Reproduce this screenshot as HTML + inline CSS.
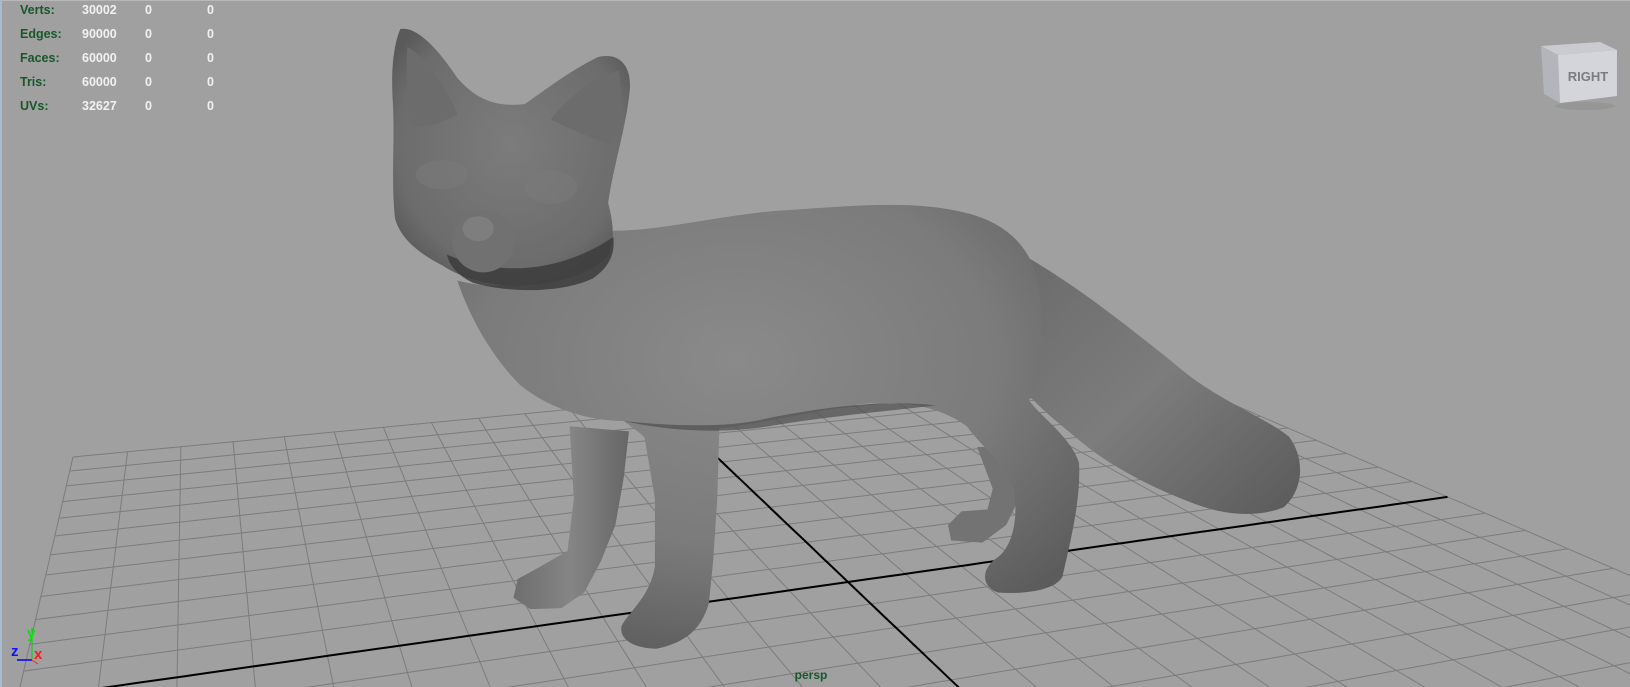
<!DOCTYPE html>
<html><head><meta charset="utf-8"><style>
html,body{margin:0;padding:0;width:1630px;height:687px;overflow:hidden;background:#a0a0a0}
#v{position:absolute;left:0;top:0}
.st{position:absolute;font:bold 12.5px "Liberation Sans",sans-serif;}
.l{color:#17572a;left:20px}
.n{color:#f2f2f2}
</style></head><body>
<svg id="v" width="1630" height="687" viewBox="0 0 1630 687">
<defs>
<radialGradient id="bd" cx="0.45" cy="0.35" r="0.7">
<stop offset="0" stop-color="#8a8a8a"/><stop offset="0.6" stop-color="#7b7b7b"/><stop offset="1" stop-color="#5c5c5c"/>
</radialGradient>
<linearGradient id="tl" x1="0" y1="0" x2="1" y2="1">
<stop offset="0" stop-color="#6a6a6a"/><stop offset="0.5" stop-color="#7c7c7c"/><stop offset="1" stop-color="#5a5a5a"/>
</linearGradient>
<linearGradient id="lg" x1="0" y1="0" x2="1" y2="0">
<stop offset="0" stop-color="#6e6e6e"/><stop offset="0.5" stop-color="#858585"/><stop offset="1" stop-color="#666"/>
</linearGradient>
<radialGradient id="hd" cx="0.5" cy="0.45" r="0.6">
<stop offset="0" stop-color="#7c7c7c"/><stop offset="0.8" stop-color="#6c6c6c"/><stop offset="1" stop-color="#5a5a5a"/>
</radialGradient>
</defs>
<rect x="0" y="0" width="1630" height="687" fill="#a0a0a0"/>
<g id="grid"></g>
<g transform="scale(1.0395)">
<path d="M548,410 L552,480 L546,530 L520,545 L498,557 L494,575 L510,586 L540,585 L562,570 L578,540 L592,505 L600,460 L605,415 Z" fill="url(#lg)"/>
<path d="M940,430 L955,470 L950,490 L925,492 L912,505 L915,520 L945,522 L968,505 L985,470 L975,430 Z" fill="#737373"/>
<path d="M975,240 C1030,270 1080,310 1130,350 C1170,385 1215,400 1240,420 C1255,440 1255,470 1235,488 C1210,498 1180,496 1150,485 C1110,470 1070,450 1040,425 C1010,400 990,385 975,360 Z" fill="url(#tl)"/>
<path d="M590,222 C640,222 700,205 760,202 C820,198 880,192 930,205 C970,215 995,240 1000,280 C1005,330 1000,370 990,385 C1000,400 1030,420 1038,445 C1040,480 1030,520 1022,555 C1015,568 985,572 960,570 C945,565 942,548 960,536 C975,525 980,495 975,470 C965,445 945,430 930,410 C900,388 860,384 820,390 C770,398 730,408 692,412 L690,480 L686,540 L682,580 C675,605 660,618 632,624 C610,624 595,615 598,602 C605,588 625,575 630,545 L630,480 L620,420 L600,405 C570,405 530,395 500,370 C470,340 450,300 440,270 C480,280 540,280 590,222 Z" fill="url(#bd)"/>
<path d="M600,405 C650,410 700,412 740,402 C790,392 850,384 900,390 C860,395 800,400 740,410 C690,418 640,414 600,405 Z" fill="#4e4e4e" opacity="0.7"/>
<path d="M385,28 C400,25 420,45 440,75 C460,98 480,103 505,100 C520,90 545,70 575,55 C595,50 607,62 606,85 C603,120 590,160 585,195 C590,215 592,230 585,245 C570,265 530,275 490,275 C460,272 440,265 425,255 C405,245 385,230 380,210 C376,170 380,140 378,100 C376,70 378,45 385,28 Z" fill="url(#hd)"/>
<path d="M392,45 C410,55 430,85 440,110 C420,120 405,125 395,120 C392,95 390,65 392,45 Z" fill="#6c6c6c"/>
<path d="M595,68 C570,75 545,95 530,115 C550,125 575,135 590,140 C597,115 600,90 595,68 Z" fill="#6c6c6c"/>
<path d="M430,245 C470,262 530,268 590,228 C592,245 585,258 570,268 C540,282 490,282 455,272 C440,265 432,255 430,245 Z" fill="#3c3c3c" opacity="0.85"/>
<ellipse cx="465" cy="232" rx="30" ry="30" fill="#717171"/>
<ellipse cx="460" cy="220" rx="15" ry="12" fill="#7e7e7e"/>
<ellipse cx="425" cy="168" rx="25" ry="14" fill="#7a7a7a" opacity="0.6"/>
<ellipse cx="530" cy="180" rx="25" ry="16" fill="#7a7a7a" opacity="0.6"/>
</g>
<g>
<polygon points="1541,46 1600,42 1617,50 1558,55" fill="#c9cbd0"/>
<polygon points="1541,46 1558,55 1560,103 1544,94" fill="#b3b5ba"/>
<polygon points="1558,55 1617,50 1617,96 1560,103" fill="#d3d5da"/>
<ellipse cx="1585" cy="106" rx="30" ry="4" fill="#888" opacity="0.4"/>
<text x="1588" y="81" font-family="Liberation Sans" font-weight="bold" font-size="13" fill="#7a7c80" text-anchor="middle">RIGHT</text>
</g>
<line x1="32" y1="659" x2="32" y2="628" stroke="#00d000" stroke-width="1"/>
<line x1="17" y1="660" x2="32" y2="660" stroke="#0000ff" stroke-width="1.5"/>
<line x1="32" y1="660" x2="38" y2="664" stroke="#ff2020" stroke-width="1"/>
<text x="27" y="638" font-family="Liberation Sans" font-weight="bold" font-size="15" fill="#10e010">y</text>
<text x="11" y="656" font-family="Liberation Sans" font-weight="bold" font-size="15" fill="#1010ff">z</text>
<text x="34" y="659" font-family="Liberation Sans" font-weight="bold" font-size="15" fill="#ff1818">x</text>
<text x="811" y="679" font-family="Liberation Sans" font-weight="bold" font-size="12" fill="#17572a" text-anchor="middle">persp</text>
<rect x="0" y="0" width="2" height="687" fill="#a8bcd0"/>
<rect x="0" y="0" width="1630" height="1" fill="#b8b8b8"/>
</svg>
<div class="st l" style="top:3px">Verts:</div><div class="st n" style="top:3px;left:82px">30002</div><div class="st n" style="top:3px;left:145px">0</div><div class="st n" style="top:3px;left:207px">0</div>
<div class="st l" style="top:27px">Edges:</div><div class="st n" style="top:27px;left:82px">90000</div><div class="st n" style="top:27px;left:145px">0</div><div class="st n" style="top:27px;left:207px">0</div>
<div class="st l" style="top:51px">Faces:</div><div class="st n" style="top:51px;left:82px">60000</div><div class="st n" style="top:51px;left:145px">0</div><div class="st n" style="top:51px;left:207px">0</div>
<div class="st l" style="top:75px">Tris:</div><div class="st n" style="top:75px;left:82px">60000</div><div class="st n" style="top:75px;left:145px">0</div><div class="st n" style="top:75px;left:207px">0</div>
<div class="st l" style="top:99px">UVs:</div><div class="st n" style="top:99px;left:82px">32627</div><div class="st n" style="top:99px;left:145px">0</div><div class="st n" style="top:99px;left:207px">0</div>
<script>
(function(){
var src=[[-12,-12],[0,-12],[0,0],[-12,0]],dst=[[73,457],[658,401],[848,582],[17,700]];
var A=[],b=[];
for(var i=0;i<4;i++){var x=src[i][0],y=src[i][1],X=dst[i][0],Y=dst[i][1];
A.push([x,y,1,0,0,0,-x*X,-y*X]);b.push(X);A.push([0,0,0,x,y,1,-x*Y,-y*Y]);b.push(Y);}
var n=8;for(var c=0;c<n;c++){var p=c;for(var r=c+1;r<n;r++)if(Math.abs(A[r][c])>Math.abs(A[p][c]))p=r;
var t=A[c];A[c]=A[p];A[p]=t;t=b[c];b[c]=b[p];b[p]=t;
for(var r=0;r<n;r++)if(r!=c){var f=A[r][c]/A[c][c];for(var k=c;k<n;k++)A[r][k]-=f*A[c][k];b[r]-=f*b[c];}}
var h=[];for(var i=0;i<n;i++)h.push(b[i]/A[i][i]);
function P(u,v){var w=h[6]*u+h[7]*v+1;return [(h[0]*u+h[1]*v+h[2])/w,(h[3]*u+h[4]*v+h[5])/w,w];}
var g=document.getElementById('grid'),s='';
function line(f,axis){var d='',pen=false;for(var k=0;k<=80;k++){var t=-12+24*k/80;var q=f(t);
if(q[2]<=0.02){pen=false;continue;}d+=(pen?'L':'M')+q[0].toFixed(1)+','+q[1].toFixed(1);pen=true;}
s+='<path d="'+d+'" fill="none" stroke="'+(axis?'#000':'#7c7c7c')+'" stroke-width="'+(axis?2:1)+'"/>';}
for(var i=-12;i<=12;i++){if(i==0)continue;(function(i){line(function(t){return P(i,t)},false);line(function(t){return P(t,i)},false);})(i);}
line(function(t){return P(0,t)},true);line(function(t){return P(t,0)},true);
g.innerHTML=s;
})();
</script>
</body></html>
